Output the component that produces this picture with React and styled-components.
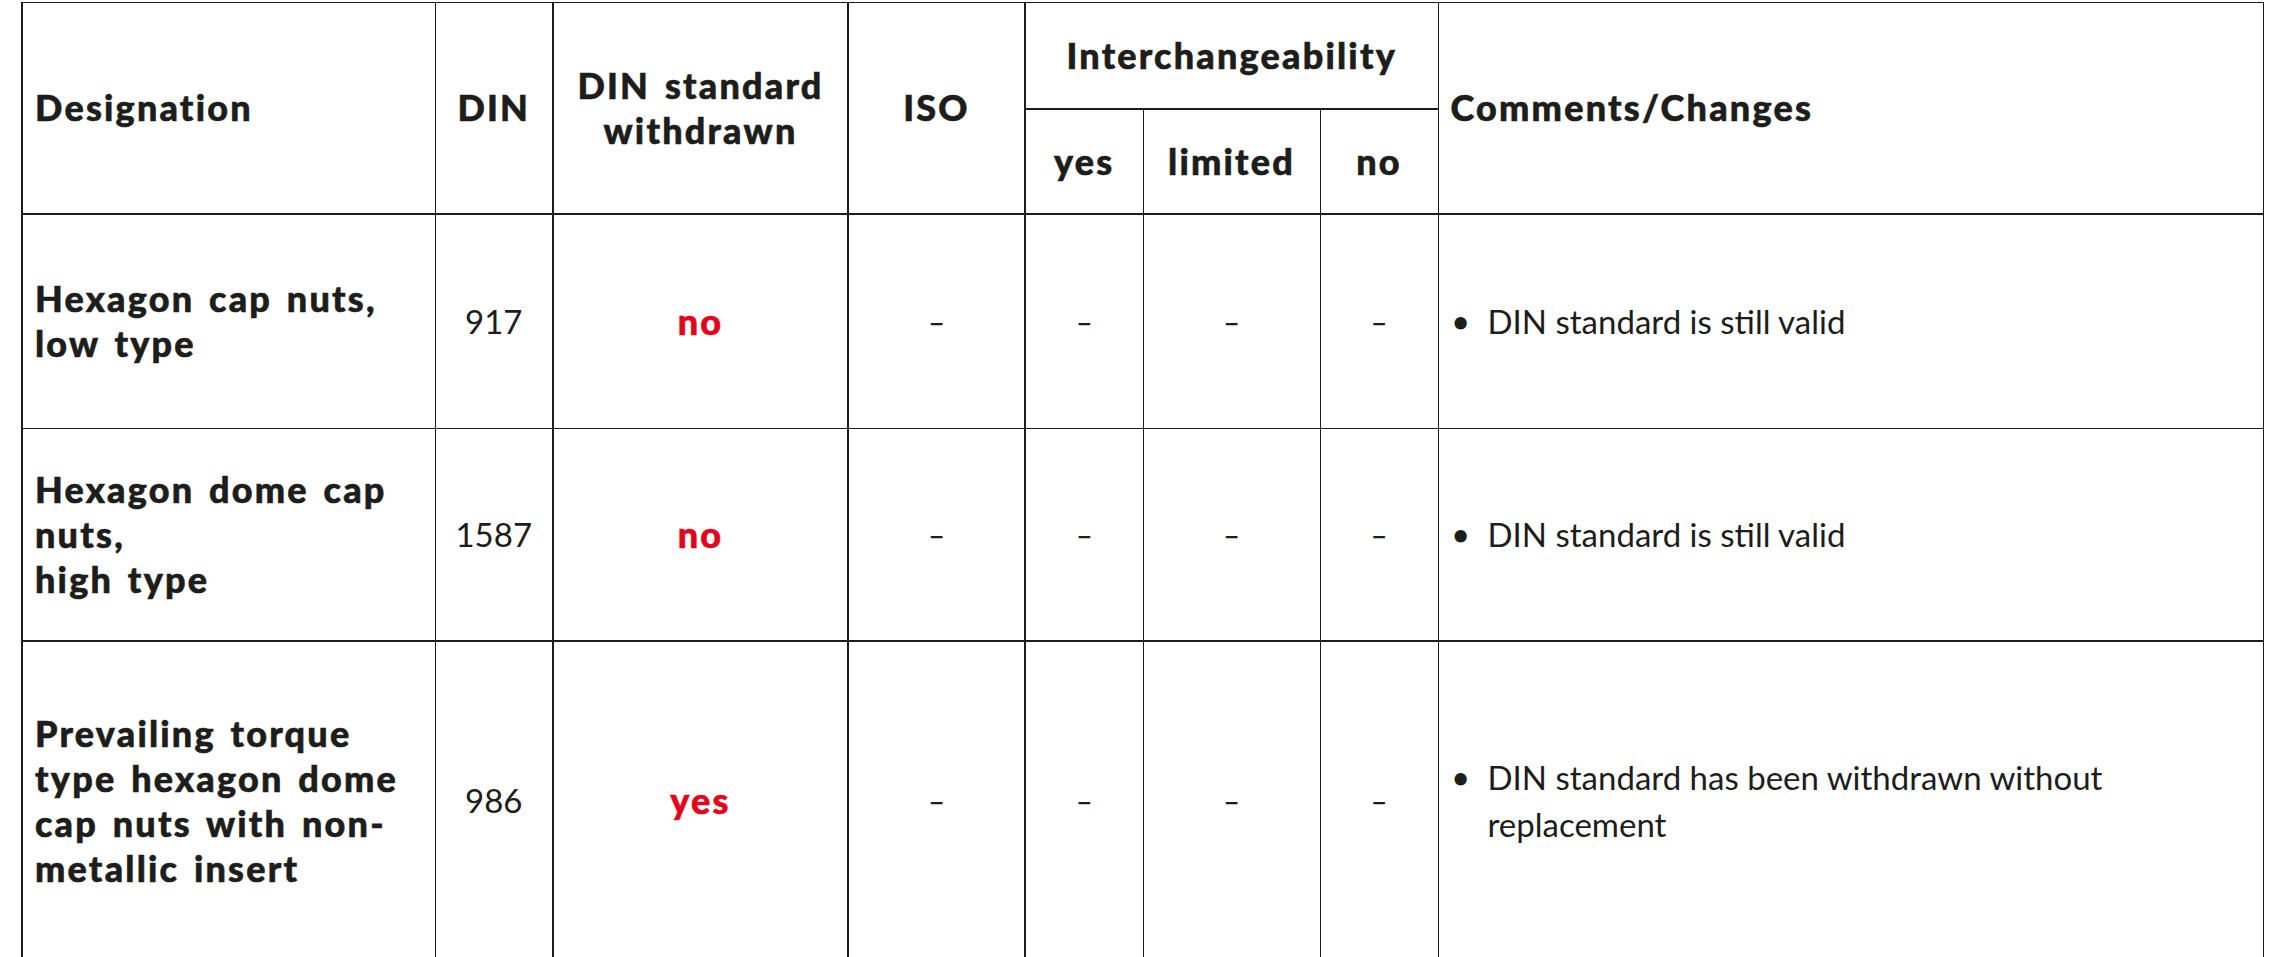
import React from 'react';
import styled, { createGlobalStyle } from 'styled-components';

const GlobalStyle = createGlobalStyle`
  html, body {
    margin: 0;
    padding: 0;
    background: #ffffff;
  }
  body {
    height: 957px;
    overflow: hidden;
    font-family: Lato, "Open Sans", sans-serif;
    color: #1d1d1b;
  }
`;

const LINE = '#1d1d1b';
const RED = '#e3051b';

const Table = styled.table`
  border-collapse: collapse;
  table-layout: fixed;
  width: 2242px;
  margin: 2px 0 0 21px;
  color: ${LINE};
`;

const Row = styled.tr`
  height: ${p => p.$h}px;
`;

const Cell = styled.td`
  border: 1px solid ${LINE};
  border-left-width: ${p => (p.$thickLeft ? 2 : 1)}px;
  border-bottom-width: ${p => (p.$thickBottom ? 2 : 1)}px;
  padding: 0 12px;
  vertical-align: middle;
  text-align: ${p => p.$align || 'center'};
  white-space: nowrap;
`;

const bold = `
  font-weight: 900;
  font-size: 36px;
  letter-spacing: 2.2px;
  word-spacing: 4px;
  line-height: 45px;
  -webkit-text-stroke: 0.6px currentColor;
`;

const HeadCell = styled(Cell).attrs({ as: 'th' })`
  ${bold}
`;

const NameCell = styled(Cell)`
  ${bold}
`;

const ValueCell = styled(Cell)`
  font-weight: 400;
  font-size: 33px;
  line-height: 47px;
`;

const StatusCell = styled(Cell)`
  ${bold}
  color: ${RED};
`;

const Dash = styled.span`
  font-size: 28px;
  -webkit-text-stroke: 0.4px currentColor;
`;

const CommentCell = styled(Cell)`
  padding-left: 14px;
  font-weight: 400;
  font-size: 33px;
  line-height: 47px;
`;

const Bullet = styled.div`
  display: flex;
  align-items: flex-start;
`;

const Dot = styled.span`
  flex: 0 0 35px;
  font-weight: 700;
  font-size: 28px;
`;

const widths = [413, 118, 295, 177, 118, 177, 118, 825];

const rows = [
  {
    name: ['Hexagon cap nuts,', 'low type'],
    din: '917',
    withdrawn: 'no',
    comment: ['DIN standard is still valid'],
    h: 215,
  },
  {
    name: ['Hexagon dome cap', 'nuts,', 'high type'],
    din: '1587',
    withdrawn: 'no',
    comment: ['DIN standard is still valid'],
    h: 212,
    thick: true,
  },
  {
    name: ['Prevailing torque', 'type hexagon dome', 'cap nuts with non-', 'metallic insert'],
    din: '986',
    withdrawn: 'yes',
    comment: ['DIN standard has been withdrawn without', 'replacement'],
    h: 320,
  },
];

const lines = arr =>
  arr.map((l, i) => (
    <React.Fragment key={i}>
      {i > 0 && <br />}
      {l}
    </React.Fragment>
  ));

export default function App() {
  return (
    <>
      <GlobalStyle />
      <Table>
        <colgroup>
          {widths.map((w, i) => (
            <col key={i} style={{ width: w }} />
          ))}
        </colgroup>
        <thead>
          <Row $h={106}>
            <HeadCell rowSpan={2} $align="left" $thickLeft $thickBottom>
              Designation
            </HeadCell>
            <HeadCell rowSpan={2} $thickBottom>DIN</HeadCell>
            <HeadCell rowSpan={2} $thickLeft $thickBottom>
              DIN standard
              <br />
              withdrawn
            </HeadCell>
            <HeadCell rowSpan={2} $thickLeft $thickBottom>ISO</HeadCell>
            <HeadCell colSpan={3} $thickLeft $thickBottom>Interchangeability</HeadCell>
            <HeadCell rowSpan={2} $align="left" $thickBottom>
              Comments/Changes
            </HeadCell>
          </Row>
          <Row $h={105}>
            <HeadCell $thickLeft $thickBottom>yes</HeadCell>
            <HeadCell $thickBottom>limited</HeadCell>
            <HeadCell $thickBottom>no</HeadCell>
          </Row>
        </thead>
        <tbody>
          {rows.map((r, i) => (
            <Row key={i} $h={r.h}>
              <NameCell $align="left" $thickLeft $thickBottom={r.thick}>
                {lines(r.name)}
              </NameCell>
              <ValueCell $thickBottom={r.thick}>{r.din}</ValueCell>
              <StatusCell $thickLeft $thickBottom={r.thick}>{r.withdrawn}</StatusCell>
              <ValueCell $thickLeft $thickBottom={r.thick}><Dash>–</Dash></ValueCell>
              <ValueCell $thickLeft $thickBottom={r.thick}><Dash>–</Dash></ValueCell>
              <ValueCell $thickBottom={r.thick}><Dash>–</Dash></ValueCell>
              <ValueCell $thickBottom={r.thick}><Dash>–</Dash></ValueCell>
              <CommentCell $align="left" $thickBottom={r.thick}>
                <Bullet>
                  <Dot>•</Dot>
                  <span>{lines(r.comment)}</span>
                </Bullet>
              </CommentCell>
            </Row>
          ))}
        </tbody>
      </Table>
    </>
  );
}
